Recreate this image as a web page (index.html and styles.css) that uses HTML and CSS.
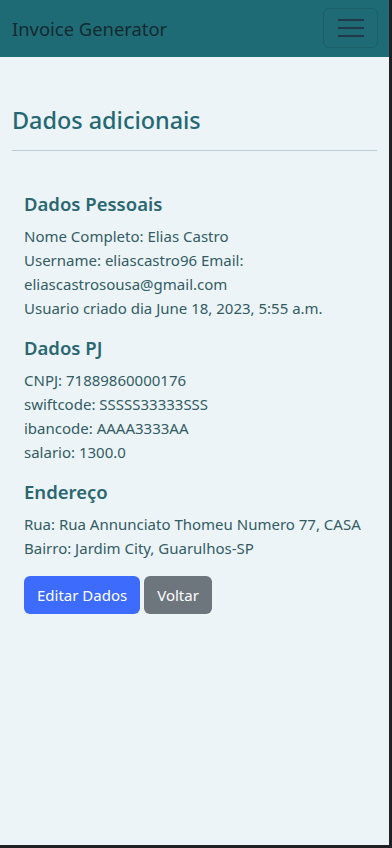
FILE: index.html
```html
<!DOCTYPE html>
<html lang="pt-BR">
  <head>
    <meta charset="UTF-8" />
    <meta name="viewport" content="width=device-width, initial-scale=1.0" />
    <title>Invoice Generator</title>
    <link rel="stylesheet" href="styles.css">
  </head>
  <body>
    <div class="page">
      <nav class="navbar">
        <a class="brand" href="#">Invoice Generator</a>
        <button class="toggler" type="button" aria-label="Menu">
          <svg width="30" height="30" viewBox="0 0 30 30">
            <path
              d="M2 7h26M2 15h26M2 23h26"
              stroke="#22394a"
              stroke-width="2"
            ></path>
          </svg>
        </button>
      </nav>

      <div class="container">
        <h2 class="title">Dados adicionais</h2>
        <hr class="divider" />

        <div class="details">
          <h4 class="section-title">Dados Pessoais</h4>
          <p class="info">
            Nome Completo: Elias Castro<br />
            Username: eliascastro96 Email: eliascastrosousa@gmail.com<br />
            Usuario criado dia June 18, 2023, 5:55 a.m.
          </p>

          <h4 class="section-title">Dados PJ</h4>
          <p class="info">
            CNPJ: 71889860000176<br />
            swiftcode: SSSSS33333SSS<br />
            ibancode: AAAA3333AA<br />
            salario: 1300.0
          </p>

          <h4 class="section-title">Endereço</h4>
          <p class="info">
            Rua: Rua Annunciato Thomeu Numero 77, CASA<br />
            Bairro: Jardim City, Guarulhos-SP
          </p>

          <div class="actions">
            <a href="#" class="btn btn-primary">Editar Dados</a>
            <a href="#" class="btn btn-secondary">Voltar</a>
          </div>
        </div>
      </div>
    </div>
  </body>
</html>
```

FILE: styles.css
```css
* {
  margin: 0;
  padding: 0;
  box-sizing: border-box;
}

html {
  background-color: #202124;
}

body {
  font-family: "Noto Sans", "Open Sans", sans-serif;
  font-size: 15px;
  line-height: 24px;
  color: #325c63;
}

.page {
  width: 389px;
  height: 845px;
  background-color: #edf4f8;
  overflow: hidden;
}

.navbar {
  height: 57px;
  background-color: #1f6b75;
  display: flex;
  align-items: center;
  justify-content: space-between;
  padding: 0 11px 0 12px;
}

.brand {
  font-size: 18.4px;
  color: #142a30;
  text-decoration: none;
}

.toggler {
  width: 55px;
  height: 40px;
  margin-top: -1px;
  background: transparent;
  border: 1px solid rgba(0, 0, 0, 0.12);
  border-radius: 6px;
  display: flex;
  align-items: center;
  justify-content: center;
}

.container {
  padding: 48px 12px 0;
}

.title {
  font-size: 23.4px;
  font-weight: 500;
  line-height: 30px;
  color: #236872;
}

.divider {
  border: none;
  border-top: 1px solid #b9ccd8;
  margin: 15px 0 0;
}

.details {
  padding: 41px 12px 0;
}

.section-title {
  font-size: 18.5px;
  font-weight: 600;
  line-height: 24px;
  color: #2a6770;
  margin-bottom: 8px;
}

.info {
  margin-bottom: 16px;
}

.actions {
  display: flex;
  gap: 4px;
}

.btn {
  display: inline-block;
  height: 38px;
  padding: 0 13px;
  line-height: 38px;
  border-radius: 6px;
  color: #ffffff;
  text-decoration: none;
  font-size: 15px;
}

.btn-primary {
  background-color: #3d6bfb;
}

.btn-secondary {
  background-color: #6d757d;
}
```
